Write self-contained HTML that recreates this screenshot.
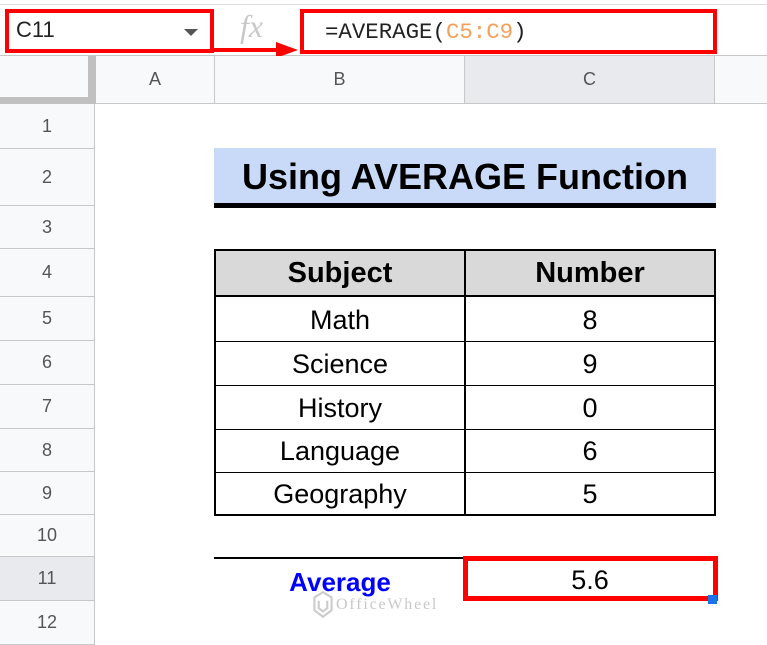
<!DOCTYPE html>
<html><head><style>
*{margin:0;padding:0;box-sizing:border-box}
body{width:767px;height:644px;position:relative;overflow:hidden;background:#fff;font-family:"Liberation Sans",Arial,sans-serif}
.a{position:absolute}
.rh{position:absolute;left:0;width:95px;background:#f8f9fa;border-bottom:1px solid #c7c7c7;border-right:1px solid #c7c7c7;color:#555;font-size:18px;display:flex;align-items:center;justify-content:center}
.ch{position:absolute;top:56px;height:48px;background:#f8f9fa;border-right:1px solid #c7c7c7;border-bottom:1px solid #c7c7c7;color:#555;font-size:18px;display:flex;align-items:center;justify-content:center}
.c{position:absolute;display:flex;align-items:center;justify-content:center;font-size:27px;color:#000}
</style></head><body>
<div class="a" style="left:0;top:0;width:767px;height:5px;border-bottom:1px solid #ddd"></div>
<div class="a" style="left:0;top:55px;width:767px;height:1px;background:#c7c7c7"></div>
<div class="a" style="left:5px;top:9px;width:209px;height:44px;border:4px solid #f00"></div>
<div class="a" style="left:16px;top:17px;font-size:22px;color:#222">C11</div>
<div class="a" style="left:184px;top:29px;width:0;height:0;border-left:7px solid transparent;border-right:7px solid transparent;border-top:7px solid #555"></div>
<div class="a" style="left:240px;top:8px;font-family:'Liberation Serif',serif;font-style:italic;font-size:32px;color:#c8c8c8">fx</div>
<div class="a" style="left:210px;top:48px;width:80px;height:4px;background:#f00"></div>
<div class="a" style="left:276px;top:42px;width:0;height:0;border-top:8px solid transparent;border-bottom:8px solid transparent;border-left:22px solid #f00"></div>
<div class="a" style="left:300px;top:9px;width:417px;height:45px;border:4px solid #f00"></div>
<div class="a" style="left:325px;top:19px;font-family:'Liberation Mono',monospace;font-size:22.4px;color:#222">=AVERAGE(<span style="color:#f5a05a">C5:C9</span>)</div>
<div class="a" style="left:0;top:56px;width:96px;height:48px;background:#f8f9fa;border-right:8px solid #c0c0c0;border-bottom:7px solid #c0c0c0"></div>
<div class="ch" style="left:96px;width:119px">A</div>
<div class="ch" style="left:215px;width:250px">B</div>
<div class="ch" style="left:465px;width:250px;background:#e8eaed">C</div>
<div class="ch" style="left:715px;width:60px"></div>
<div class="rh" style="top:104px;height:45px">1</div>
<div class="rh" style="top:149px;height:57px">2</div>
<div class="rh" style="top:206px;height:43px">3</div>
<div class="rh" style="top:249px;height:48px">4</div>
<div class="rh" style="top:297px;height:44px">5</div>
<div class="rh" style="top:341px;height:44px">6</div>
<div class="rh" style="top:385px;height:44px">7</div>
<div class="rh" style="top:429px;height:43px">8</div>
<div class="rh" style="top:472px;height:43px">9</div>
<div class="rh" style="top:515px;height:42px">10</div>
<div class="rh" style="top:557px;height:44px;background:#e8eaed">11</div>
<div class="rh" style="top:601px;height:44px">12</div>
<div class="a" style="left:214px;top:148px;width:502px;height:60px;background:#c9daf8;border-bottom:5px solid #000;display:flex;align-items:center;justify-content:center;font-weight:bold;font-size:36px;padding-top:2px">Using AVERAGE Function</div>
<div class="a" style="left:214px;top:249px;width:502px;height:267px;border:2px solid #000"></div>
<div class="a" style="left:214px;top:249px;width:502px;height:48px;background:#d9d9d9;border:2px solid #000"></div>
<div class="a" style="left:464px;top:249px;width:2px;height:267px;background:#000"></div>
<div class="a" style="left:214px;top:341px;width:502px;height:1px;background:#000"></div>
<div class="a" style="left:214px;top:385px;width:502px;height:1px;background:#000"></div>
<div class="a" style="left:214px;top:429px;width:502px;height:1px;background:#000"></div>
<div class="a" style="left:214px;top:472px;width:502px;height:1px;background:#000"></div>
<div class="c" style="left:215px;top:250px;width:250px;height:47px;font-weight:bold;font-size:29px">Subject</div>
<div class="c" style="left:465px;top:250px;width:250px;height:47px;font-weight:bold;font-size:29px">Number</div>
<div class="c" style="left:215px;top:298px;width:250px;height:44px">Math</div>
<div class="c" style="left:465px;top:298px;width:250px;height:44px">8</div>
<div class="c" style="left:215px;top:342px;width:250px;height:44px">Science</div>
<div class="c" style="left:465px;top:342px;width:250px;height:44px">9</div>
<div class="c" style="left:215px;top:386px;width:250px;height:44px">History</div>
<div class="c" style="left:465px;top:386px;width:250px;height:44px">0</div>
<div class="c" style="left:215px;top:430px;width:250px;height:43px">Language</div>
<div class="c" style="left:465px;top:430px;width:250px;height:43px">6</div>
<div class="c" style="left:215px;top:473px;width:250px;height:43px">Geography</div>
<div class="c" style="left:465px;top:473px;width:250px;height:43px">5</div>
<div class="a" style="left:214px;top:557px;width:502px;height:2px;background:#000"></div>
<div class="c" style="left:215px;top:560px;width:250px;height:44px;color:#0000ff;font-weight:bold;font-size:26px">Average</div>
<div class="a" style="left:463px;top:556px;width:255px;height:45px;border:5px solid #f00"></div>
<div class="c" style="left:465px;top:559px;width:250px;height:42px">5.6</div>
<div class="a" style="left:708px;top:595px;width:9px;height:9px;background:#1a73e8"></div>
<div class="a" style="left:336px;top:596px;font-family:'Liberation Serif',serif;font-size:16px;color:#c8c8c8;letter-spacing:1.8px">OfficeWheel</div>
<svg class="a" style="left:312px;top:590px" width="22" height="30" viewBox="0 0 20 28"><path d="M10 2L18 7V19L10 25L2 19V7Z" fill="none" stroke="#ccc" stroke-width="2"/><path d="M6 10V17L10 20L14 17V10" fill="none" stroke="#ccc" stroke-width="2"/></svg>
</body></html>
